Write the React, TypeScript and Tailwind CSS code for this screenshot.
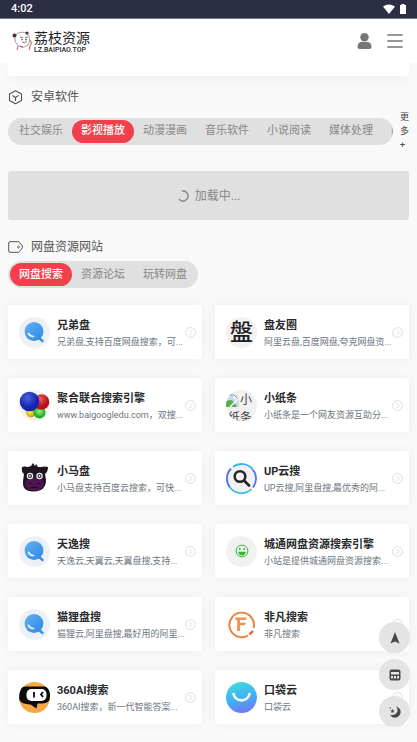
import type { ReactNode } from "react";

const softwareTabs = ["社交娱乐", "影视播放", "动漫漫画", "音乐软件", "小说阅读", "媒体处理", "网络"];
const siteTabs = ["网盘搜索", "资源论坛", "玩转网盘"];

function Disc({ children }: { children: ReactNode }) {
  return (
    <span className="flex size-[31px] shrink-0 items-center justify-center overflow-hidden rounded-full bg-[#f1f1f1]">
      {children}
    </span>
  );
}

function SearchBall() {
  return (
    <svg viewBox="0 0 31 31" className="size-[31px] shrink-0" aria-hidden="true">
      <defs>
        <linearGradient id="ball" x1="0" y1="0" x2="1" y2="1">
          <stop offset="0" stopColor="#62b2f4" />
          <stop offset="1" stopColor="#2c87e4" />
        </linearGradient>
      </defs>
      <circle cx="15.5" cy="15.5" r="15.5" fill="#edf1f6" />
      <path d="M19 20l4.500 4" stroke="#3b93e8" strokeWidth="2.600" strokeLinecap="round" />
      <circle cx="15" cy="14.500" r="9.400" fill="url(#ball)" />
      <path d="M9.500 16.500c1 2 2.700 3 5 3" stroke="#e6f5ff" strokeWidth="1.700" fill="none" strokeLinecap="round" />
    </svg>
  );
}

function ColorBalls() {
  return (
    <svg viewBox="0 0 31 31" className="size-[31px] shrink-0" aria-hidden="true">
      <defs>
        <radialGradient id="bl" cx=".4" cy=".3"><stop offset="0" stopColor="#4a62dc" /><stop offset="1" stopColor="#1423b0" /></radialGradient>
        <radialGradient id="rd" cx=".4" cy=".3"><stop offset="0" stopColor="#f06060" /><stop offset="1" stopColor="#b90f18" /></radialGradient>
        <radialGradient id="yl" cx=".4" cy=".4"><stop offset="0" stopColor="#fff35c" /><stop offset="1" stopColor="#c9ac10" /></radialGradient>
        <radialGradient id="gr" cx=".5" cy=".4"><stop offset="0" stopColor="#8bff76" /><stop offset="1" stopColor="#20a51e" /></radialGradient>
      </defs>
      <circle cx="15.500" cy="15.500" r="15.500" fill="#f1f1f1" />
      <circle cx="12" cy="22.500" r="5" fill="url(#yl)" />
      <circle cx="20.500" cy="22.500" r="6" fill="url(#gr)" />
      <circle cx="22.500" cy="12" r="7.800" fill="url(#rd)" />
      <circle cx="10.500" cy="11.500" r="9.800" fill="url(#bl)" />
    </svg>
  );
}

function Pony() {
  return (
    <svg viewBox="0 0 31 31" className="size-[31px] shrink-0" aria-hidden="true">
      <path d="M3 4q3-1 6 0l3-1 2-3 2 3 1-2 2 3 3 0q4-1 7 0 0 5-3 7l1 6q0 11-12 11.500T4 18l1-7Q2 9 3 4z" fill="#211525" />
      <ellipse cx="15.500" cy="21" rx="9.500" ry="6.500" fill="#4d1451" />
      <g fill="#211525" stroke="#eee" strokeWidth="1.300">
        <circle cx="11" cy="13" r="2.600" />
        <circle cx="20.500" cy="13" r="2.600" />
      </g>
      <circle cx="11" cy="13" r=".9" fill="#fff" />
      <circle cx="20.500" cy="13" r=".9" fill="#fff" />
      <path d="M10 20l2 1M19 21l2-1M12 24.500h7" stroke="#190a1c" strokeWidth="1.200" />
    </svg>
  );
}

function RingSearch() {
  return (
    <svg viewBox="0 0 31 31" className="size-[31px] shrink-0" fill="none" aria-hidden="true">
      <circle cx="15.500" cy="15.500" r="14" fill="#f2f2f4" />
      <path d="M7 3.800A14.500 14.500 0 0 1 27 6.700" stroke="#36b4f4" strokeWidth="1.800" />
      <path d="M27 6.700a14.500 14.500 0 0 1 0 17.800" stroke="#4a73ee" strokeWidth="1.800" />
      <path d="M25.500 26.200A14.500 14.500 0 0 1 4 24.500" stroke="#39bdf5" strokeWidth="1.800" />
      <path d="M4 24.500A14.500 14.500 0 0 1 5 5.500" stroke="#526ff0" strokeWidth="1.800" />
      <circle cx="14" cy="13.500" r="5.300" stroke="#25262a" strokeWidth="2.500" />
      <path d="M18 17.500l5 5" stroke="#25262a" strokeWidth="2.800" strokeLinecap="round" />
    </svg>
  );
}

function Smile() {
  return (
    <Disc>
      <svg viewBox="0 0 14 14" className="size-[14px]" fill="none" stroke="#32b835" aria-hidden="true">
        <circle cx="7" cy="7" r="5.900" strokeWidth="1" />
        <path d="M4.800 4v2M9.200 4v2" strokeWidth="1.500" />
        <path d="M3.500 8h7Q10 11.300 7 11.300T3.500 8z" fill="#32b835" strokeWidth=".6" />
      </svg>
    </Disc>
  );
}

function OrangeF() {
  return (
    <svg viewBox="0 0 31 31" className="size-[31px] shrink-0" fill="none" aria-hidden="true">
      <path d="M22 26.500A12.300 12.300 0 1 1 27.600 19" stroke="#f07c3c" strokeWidth="1.900" />
      <path d="M23.500 25.500l3.500-3.500" stroke="#e9582b" strokeWidth="2.400" />
      <path d="M9 8.500h12l-1.500 2.600H14v10.900h-2.800V11.100q-2 0-2.200-2.600z" fill="#f3904f" />
      <path d="M14 13.800h6l-1.400 2.400H14z" fill="#f3904f" />
    </svg>
  );
}

function Robot() {
  return (
    <svg viewBox="0 0 31 31" className="size-[31px] shrink-0" aria-hidden="true">
      <circle cx="15.500" cy="15.500" r="15.500" fill="#f5a945" />
      <path d="M2 7q1-2.500 4-2.500h19q3 0 4.500 3 1.500 2 1.500 7 0 7-8 7h-4.500l-1 5-6-4Q2 22 .5 18-.5 12 2 7z" fill="#0b0b0c" />
      <rect x="7.500" y="7" width="20" height="12" rx="5" fill="#fff" />
      <path d="M15 10v5.500M24 10l-2 2.500 2 2.500" stroke="#111" strokeWidth="1.900" fill="none" />
    </svg>
  );
}

function Pocket() {
  return (
    <svg viewBox="0 0 31 31" className="size-[31px] shrink-0" aria-hidden="true">
      <defs>
        <linearGradient id="pocket" x1=".3" y1="0" x2=".6" y2="1">
          <stop offset="0" stopColor="#42d9e0" />
          <stop offset=".55" stopColor="#41aff4" />
          <stop offset="1" stopColor="#7378f2" />
        </linearGradient>
      </defs>
      <circle cx="15.500" cy="15.500" r="15.500" fill="url(#pocket)" />
      <path d="M7.500 12a8.200 8.200 0 0 0 16 0" stroke="#fff" strokeWidth="2.600" fill="none" strokeLinecap="round" />
    </svg>
  );
}

function MissingPicture() {
  return (
    <span className="block size-[31px] shrink-0 overflow-hidden rounded-full bg-[#f1f1f1] pt-px text-[12px] leading-[18px] text-[#444]">
      <svg viewBox="0 0 13 13" className="mr-px inline size-[13px]" aria-hidden="true">
        <path d="M0 0h9l4 4v9H0z" fill="#c6d8f3" />
        <path d="M0 13V8q4-4 8 0l3 5z" fill="#56ac45" />
        <path d="M8 0v4h5L4 13" fill="none" stroke="#fff" strokeWidth="1.500" />
        <path d="M1 1h7l4 4" fill="none" stroke="#999" />
      </svg>
      小<span className="block pl-[2px]">纸条</span>
    </span>
  );
}

const sites: { name: string; desc: string; icon: ReactNode }[] = [
  { name: "兄弟盘", desc: "兄弟盘,支持百度网盘搜索，可...", icon: <SearchBall /> },
  {
    name: "盘友圈",
    desc: "阿里云盘,百度网盘,夸克网盘资...",
    icon: <Disc><span className="text-[23px] leading-none font-medium text-[#1d1d1d]">盤</span></Disc>,
  },
  { name: "聚合联合搜索引擎", desc: "www.baigoogledu.com，双搜...", icon: <ColorBalls /> },
  { name: "小纸条", desc: "小纸条是一个网友资源互助分...", icon: <MissingPicture /> },
  { name: "小马盘", desc: "小马盘支持百度云搜索，可快...", icon: <Pony /> },
  { name: "UP云搜", desc: "UP云搜,阿里盘搜,最优秀的阿...", icon: <RingSearch /> },
  { name: "天逸搜", desc: "天逸云,天翼云,天翼盘搜,支持...", icon: <SearchBall /> },
  { name: "城通网盘资源搜索引擎", desc: "小站是提供城通网盘资源搜索...", icon: <Smile /> },
  { name: "猫狸盘搜", desc: "猫狸云,阿里盘搜,最好用的阿里...", icon: <SearchBall /> },
  { name: "非凡搜索", desc: "非凡搜索", icon: <OrangeF /> },
  { name: "360AI搜索", desc: "360AI搜索，新一代智能答案...", icon: <Robot /> },
  { name: "口袋云", desc: "口袋云", icon: <Pocket /> },
];

function Tabs({ items, active }: { items: string[]; active: number }) {
  return (
    <div className="flex min-w-0 overflow-x-auto overflow-y-hidden rounded-full bg-[#e0e0e0] p-[2px] [scrollbar-width:none]">
      {items.map((t, i) => (
        <button
          key={t}
          className={
            i === active
              ? "h-[23px] shrink-0 rounded-full bg-[#f1404b] px-[9px] text-[11px] leading-[22px] font-medium text-white"
              : "h-[23px] shrink-0 rounded-full px-[9px] text-[11px] leading-[22px] text-[#888]"
          }
        >
          {t}
        </button>
      ))}
    </div>
  );
}

function FloatButton({ label, children }: { label: string; children: ReactNode }) {
  return (
    <button aria-label={label} className="flex size-[31px] items-center justify-center rounded-full bg-[#e1e1e1]/90">
      <svg viewBox="0 0 12 12" className="size-3" fill="#484848" aria-hidden="true">{children}</svg>
    </button>
  );
}

export default function App() {
  return (
    <div className="min-h-screen bg-[#f9f9f9] pb-[18px] font-[Roboto,'Noto_Sans_CJK_SC',sans-serif] text-[#555]">
      <div className="flex h-[19px] items-center justify-between border-b border-[#77778a] bg-[#2c2e43] pr-[11px] pl-[11px] text-white">
        <span className="text-[11px] leading-[18px] font-medium">4:02</span>
        <span className="flex items-center gap-[5px]">
          <svg viewBox="0 0 12 10" className="h-[10px] w-3" fill="#fff" aria-hidden="true"><path d="M0 2.500Q6-1.500 12 2.500L6 10z" /></svg>
          <svg viewBox="0 0 6 10" className="h-[10px] w-[6px]" fill="#fff" aria-hidden="true"><path d="M1.500 0h3v1H6v9H0V1h1.500z" /></svg>
        </span>
      </div>

      <header className="flex h-11 items-center justify-between bg-white pr-[14px] pl-3">
        <a href="#" className="flex items-center gap-[2px] text-[#222]">
          <svg viewBox="0 0 20 20" className="size-5" fill="none" aria-hidden="true">
            <path d="M3 5C6 0 15 0 17 5q2 5-1 9-5 4-9 1Q2 12 3 5z" fill="#fff" stroke="#777" strokeWidth=".7" />
            <circle cx="2.500" cy="4.500" r="2" fill="#5b2b2b" />
            <circle cx="15" cy="2" r="1.600" fill="#5b2b2b" />
            <path d="M8 6l3 1M13 7l3-1M9 8.500h2M13 8.500h2M10 11q3 2 5-1" stroke="#555" strokeWidth=".8" />
            <path d="M9 9h1M13 10h2" stroke="#e7a4a1" />
            <path d="M6 15l-1 4M18 9q3 3 0 6l-1 4M8 15l3 1" stroke="#b44a46" strokeWidth=".9" />
          </svg>
          <span className="flex flex-col pt-[3px]">
            <span className="text-[14px] leading-[15px]">荔枝资源</span>
            <span className="text-[7px] leading-[8px] font-medium">LZ.BAIPIAO.TOP</span>
          </span>
        </a>
        <div className="flex items-center gap-[15px] text-[#777]">
          <button aria-label="用户">
            <svg viewBox="0 0 15 17" className="h-[17px] w-[15px]" fill="#777" aria-hidden="true">
              <circle cx="7.500" cy="4.300" r="4.200" />
              <path d="M.5 14Q.5 9 5 9h5q4.500 0 4.500 5 0 2-2 2h-10q-2 0-2-2z" />
            </svg>
          </button>
          <button aria-label="菜单">
            <svg viewBox="0 0 16 14" className="h-[14px] w-4" stroke="#777" strokeWidth="1.700" strokeLinecap="round" aria-hidden="true">
              <path d="M1 1h14M1 7h14M1 13h14" />
            </svg>
          </button>
        </div>
      </header>

      <main className="px-2">
        <div className="h-[13px] rounded-b-[3px] bg-white shadow-[0_5px_10px_rgba(0,0,0,0.03)]" />

        <h2 className="mt-3 flex items-center gap-2 text-[12px] leading-[18px]">
          <svg viewBox="0 0 15 15" className="size-[15px]" fill="none" stroke="#555" strokeWidth="1.100" strokeLinejoin="round" aria-hidden="true">
            <path d="M7.500 .8l6 3.200v6.600l-6 3.200-6-3.200V4zM4.500 5.500l3 2 3-2M7.500 7.500v3.500" />
          </svg>
          安卓软件
        </h2>

        <div className="mt-1 flex items-center gap-[7px]">
          <Tabs items={softwareTabs} active={1} />
          <a href="#" className="w-[9px] shrink-0 text-[9px] leading-[14px] break-all text-[#444]">更多+</a>
        </div>

        <div className="mt-[19px] flex h-[49px] items-center justify-center gap-[6px] rounded-[3px] bg-[#e0e0e0] text-[12px] text-[#888]">
          <svg viewBox="0 0 12 12" className="size-3" fill="none" stroke="#888" strokeWidth="1.500" aria-hidden="true">
            <path d="M5 1.100A5 5 0 1 1 2 9" />
          </svg>
          加载中...
        </div>

        <h2 className="mt-[18px] flex items-center gap-2 text-[12px] leading-[18px]">
          <svg viewBox="0 0 15 12" className="h-3 w-[15px]" fill="none" stroke="#555" aria-hidden="true">
            <path d="M2 .7h8q1 0 1.600.7L14.200 5q.6 1 0 2l-2.600 3.600q-.6.700-1.600.700H2q-1.300 0-1.300-1.300V2Q.7.700 2 .7z" />
            <circle cx="10.500" cy="6" r="1" strokeWidth=".8" />
          </svg>
          网盘资源网站
        </h2>
        <div className="mt-[5px] flex">
          <Tabs items={siteTabs} active={0} />
        </div>

        <div className="mt-[17px] grid grid-cols-2 gap-x-[13px] gap-y-[19px]">
          {sites.map((s) => (
            <a
              key={s.name}
              href="#"
              className="flex h-[54px] min-w-0 items-center rounded-[3px] bg-white pr-[6px] pl-[11px] shadow-[0_0_12px_rgba(0,0,0,0.05)]"
            >
              {s.icon}
              <span className="ml-[7px] flex min-w-0 flex-1 flex-col pt-[4px]">
                <strong className="truncate text-[11px] leading-4 font-bold text-[#282a2d]">{s.name}</strong>
                <span className="overflow-hidden text-[9px] leading-4 whitespace-nowrap text-[#6c757d]">{s.desc}</span>
              </span>
              <svg viewBox="0 0 11 11" className="size-[11px] shrink-0" fill="none" stroke="#dcdcdc" aria-hidden="true">
                <circle cx="5.500" cy="5.500" r="4.900" />
                <path d="M4.500 3l2.500 2.500L4.500 8" />
              </svg>
            </a>
          ))}
        </div>
      </main>

      <div className="fixed right-[7px] bottom-[15px] flex flex-col gap-[6px]">
        <FloatButton label="返回顶部"><path d="M6 0l4.500 11.500L6 9.500l-4.500 2z" /></FloatButton>
        <FloatButton label="小工具">
          <path fillRule="evenodd" d="M2.500.500h7q2 0 2 2v7q0 2-2 2h-7q-2 0-2-2v-7q0-2 2-2zM2 3v2.500h8V3zM2 7v2.500h2V7zM5 7v2.500h2V7zM8 7v2.500h2V7z" />
        </FloatButton>
        <FloatButton label="夜间模式">
          <path d="M7 .5a5.600 5.600 0 1 1-6 8Q5 10 7.500 7T7 .5zM3.500 3l.6 1.300 1.400.2-1 1 .2 1.400-1.200-.7-1.200.7.200-1.400-1-1 1.400-.2z" />
          <circle cx="1.200" cy="2" r=".7" />
        </FloatButton>
      </div>
    </div>
  );
}
